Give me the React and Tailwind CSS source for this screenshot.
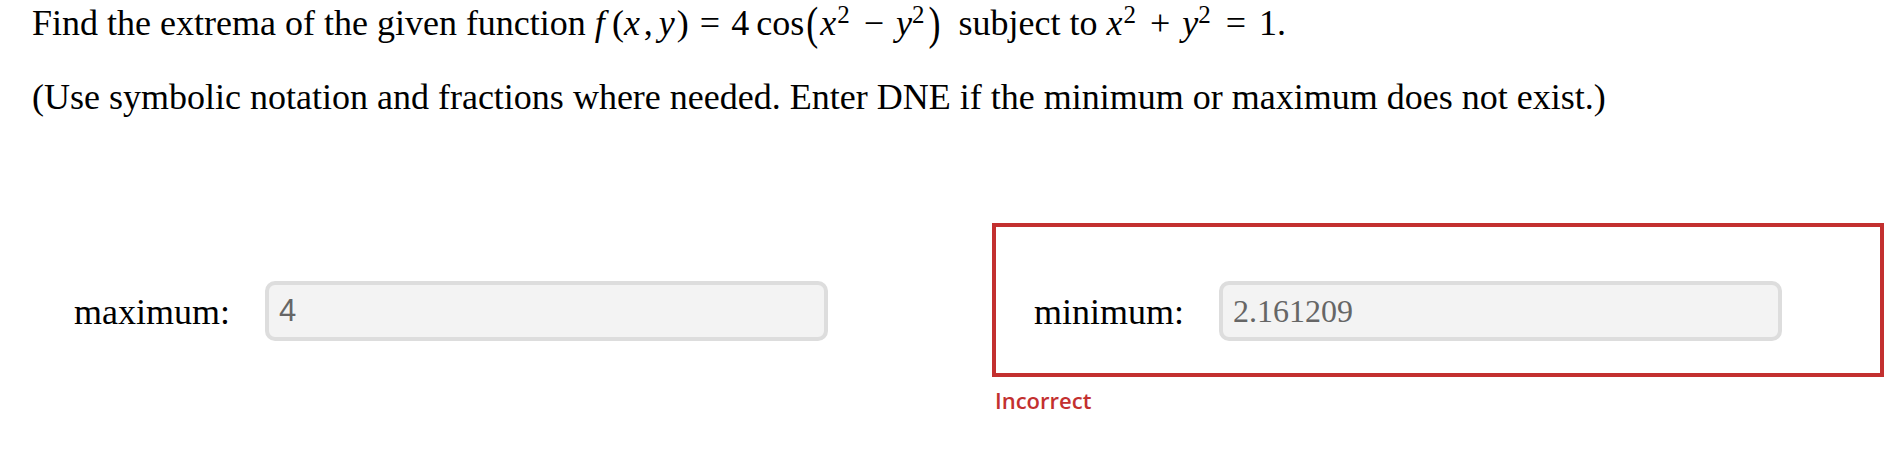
import React from "react";

const serif = { fontFamily: '"Liberation Serif", "Times New Roman", serif' };

// italic math letters a bit wider, like the MathJax font
const V = ({ children, extra = "" }) => (
  <span className={"italic inline-block " + extra}>{children}</span>
);

const Sq = () => <sup className="text-[25px] mr-[2px]">2</sup>;

const AnswerBox = ({ label, value, incorrect, valueFont }) => {
  return (
    <div className="flex flex-col">
      <div
        className={
          "w-[892px] border-4 flex items-center pt-[54px] pb-[32px] pl-[38px] " +
          (incorrect ? "border-[#c3302f]" : "border-transparent")
        }
      >
        <span className="text-[36px] leading-[43px] text-black relative top-[1px]">{label}</span>
        <input
          readOnly
          value={value}
          className={
            "ml-[35px] w-[563px] h-[60px] border-4 border-[#dddddd] rounded-[10px] bg-[#f3f3f3] text-[#666666] pl-[10px] outline-none " +
            valueFont
          }
        />
      </div>
      {incorrect && (
        <div className="mt-2 pl-[3px] font-['Open_Sans',sans-serif] font-semibold text-[22px] leading-[30px] text-[#c3302f]">
          Incorrect
        </div>
      )}
    </div>
  );
};

export default function App() {
  return (
    <div className="w-[1900px] h-[466px] bg-white overflow-hidden pt-[2px] pl-[32px] text-black" style={serif}>
      <p className="text-[36px] leading-[43px] whitespace-nowrap">
        Find the extrema of the given function{" "}
        <V extra="pr-[4px]">f</V>
        <span className="ml-[3px]">(</span>
        <V extra="pr-[4px]">x</V>
        <span>,</span>
        <V extra="ml-[6px] pr-[2px]">y</V>
        <span>)</span>
        <span className="mx-[11px]">=</span>
        <span>4</span>
        <span className="ml-[7px]">cos</span>
        <span className="inline-block leading-none scale-y-[1.3] ml-[2px]">(</span>
        <V extra="ml-[2px] pr-[1px]">x</V>
        <Sq />
        <span className="mx-[12px]">−</span>
        <V>y</V>
        <Sq />
        <span className="inline-block leading-none scale-y-[1.3] ml-[2px]">)</span>
        <span className="ml-[18px]">subject to </span>
        <V extra="pr-[1px]">x</V>
        <Sq />
        <span className="mx-[12px]">+</span>
        <V>y</V>
        <Sq />
        <span className="mx-[13px]">=</span>
        <span>1.</span>
      </p>
      <p className="mt-[31px] text-[36px] leading-[43px] whitespace-nowrap">
        (Use symbolic notation and fractions where needed. Enter DNE if the minimum or maximum does not exist.)
      </p>

      <div className="mt-[104px] flex items-start">
        <AnswerBox label="maximum:" value="4" valueFont="font-['Liberation_Sans',Arial,sans-serif] text-[31px]" />
        <div className="ml-[68px]">
          <AnswerBox
            label="minimum:"
            value="2.161209"
            incorrect
            valueFont="font-['Liberation_Serif','Times_New_Roman',serif] text-[32px]"
          />
        </div>
      </div>
    </div>
  );
}
